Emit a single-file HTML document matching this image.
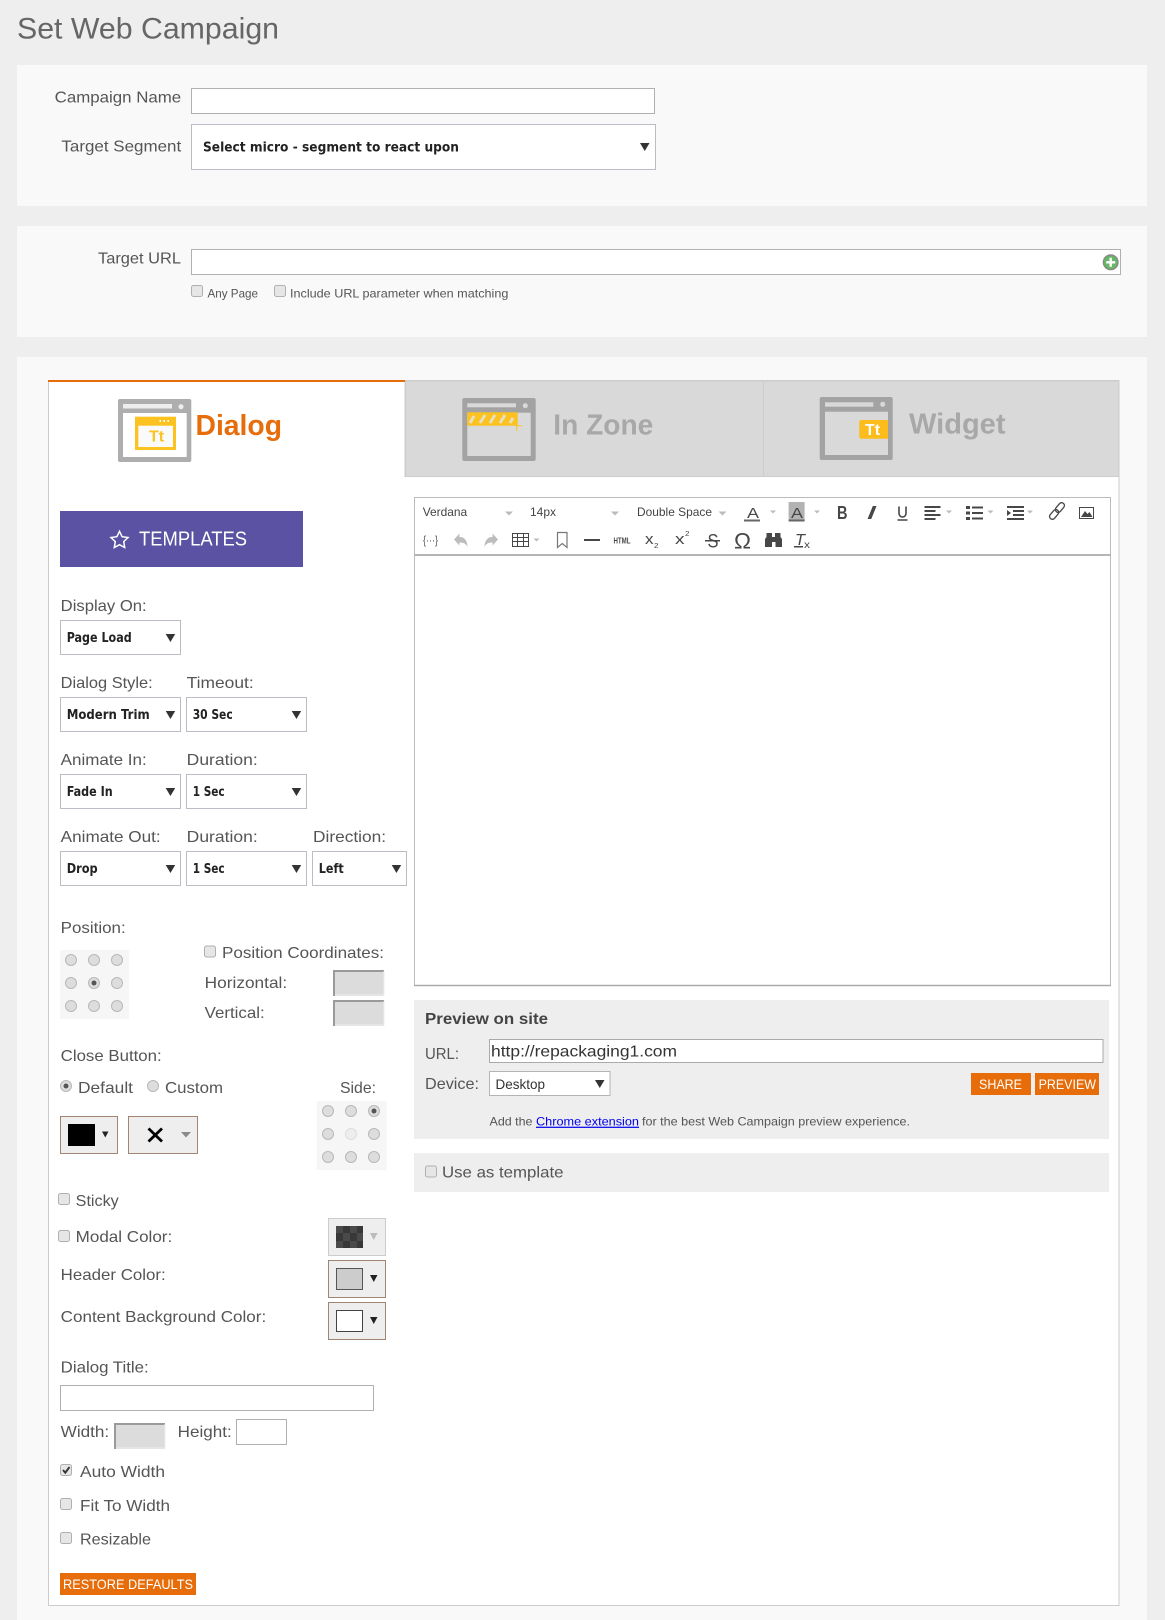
<!DOCTYPE html>
<html lang="en"><head><meta charset="utf-8"><title>Set Web Campaign</title>
<style>
html,body{margin:0;padding:0;background:#eee;width:1165px;height:1620px;overflow:hidden}
svg{display:block}
text{font-family:"Liberation Sans",Arial,sans-serif;fill:#555;font-size:16px}
.b{font-weight:700;fill:#222;font-size:13px;font-family:"DejaVu Sans","Liberation Sans",sans-serif}
.s{font-size:12px}
.w{fill:#fff;font-size:14px}
.t{font-size:12px;fill:#444}
.box{fill:#fff;stroke:#bbbcc4}
.inp{fill:#fff;stroke:#b0b0b0}
.ic{stroke:#474747;fill:none;stroke-width:1.6}
.if{fill:#474747}
.ar{fill:#bbb}
</style></head>
<body>
<svg xmlns="http://www.w3.org/2000/svg" width="1165" height="1620" viewBox="0 0 1165 1620">
<defs>
<g id="rd"><circle r="5.5" fill="#ddd" stroke="#b8b8b8"/></g>
<g id="rs"><circle r="5.5" fill="#ddd" stroke="#b8b8b8"/><circle r="2.5" fill="#555"/></g>
<g id="cb"><rect x=".5" y=".5" width="11" height="11" rx="2" fill="#e6e6e6" stroke="#b0b0b0"/></g>
<path id="tri" d="M0 0h9.5l-4.75 8z" fill="#333"/>
</defs>
<rect width="1165" height="1620" fill="#eee"/>
<text x="17" y="38.5" style="font-size:30px;fill:#666" textLength="262" lengthAdjust="spacingAndGlyphs">Set Web Campaign</text>

<!-- panel 1 -->
<rect x="17" y="65" width="1130" height="141" fill="#f9f9f9"/>
<text x="54.7" y="102.5" textLength="126.5" lengthAdjust="spacingAndGlyphs">Campaign Name</text>
<rect class="inp" x="191.5" y="88.5" width="463" height="25"/>
<text x="61.4" y="151.5" textLength="119.8" lengthAdjust="spacingAndGlyphs">Target Segment</text>
<rect class="box" x="191.5" y="124.5" width="464" height="45"/>
<text class="b" x="203" y="151.7" textLength="256" lengthAdjust="spacingAndGlyphs">Select micro - segment to react upon</text>
<use href="#tri" x="640" y="143"/>

<!-- panel 2 -->
<rect x="17" y="226" width="1130" height="111" fill="#f9f9f9"/>
<text x="98" y="263.5" textLength="83" lengthAdjust="spacingAndGlyphs">Target URL</text>
<rect class="inp" x="191.5" y="249.5" width="929" height="25"/>
<circle cx="1110.7" cy="262.3" r="8" fill="#888"/><circle cx="1110.7" cy="262.3" r="6.7" fill="#68b668"/>
<path d="M1110.7 257.8v9M1106.2 262.3h9" stroke="#fff" stroke-width="2.4"/>
<use href="#cb" x="191" y="285"/>
<text class="s" x="207.5" y="297.5" textLength="50.5" lengthAdjust="spacingAndGlyphs">Any Page</text>
<use href="#cb" x="274" y="285"/>
<text class="s" x="290" y="297.5" textLength="218.4" lengthAdjust="spacingAndGlyphs">Include URL parameter when matching</text>

<!-- panel 3 -->
<rect x="17" y="357" width="1130" height="1263" fill="#f9f9f9"/>
<rect x="48.5" y="380.5" width="1070.5" height="1225" fill="#fff" stroke="#ccc"/>
<rect x="405" y="381" width="714" height="95.500" fill="#d9d9d9" stroke="#ccc"/>
<path d="M763.500 381v95" stroke="#ccc"/>
<rect x="48" y="380" width="357" height="2" fill="#e66d0a"/>
<path d="M405.500 381v96" stroke="#ccc"/>

<!-- Dialog tab -->
<rect x="118" y="399" width="73.300" height="63" rx="2" fill="#aeaeae"/>
<rect x="123" y="413" width="63.700" height="44" fill="#fff"/>
<rect x="123" y="404" width="49" height="4.500" fill="#eee"/>
<circle cx="181" cy="406.700" r="2.500" fill="#eee"/>
<rect x="135" y="416.700" width="41" height="33.300" fill="#fcc21f"/>
<rect x="138.300" y="425.700" width="34.700" height="21.300" fill="#fafafa"/>
<path d="M159.500 421h1.500M163.500 421h1.500M167.500 421h1.500" stroke="#fff" stroke-width="2"/>
<text x="149" y="441.700" style="font-size:16px;font-weight:700;fill:#fcc21f" textLength="15" lengthAdjust="spacingAndGlyphs">Tt</text>
<text x="195.500" y="435" style="font-size:29px;font-weight:700;fill:#e66d0a" textLength="86.500" lengthAdjust="spacingAndGlyphs">Dialog</text>

<!-- In Zone tab -->
<rect x="462.300" y="398" width="73.400" height="63" rx="2" fill="#a3a3a3"/>
<rect x="467.300" y="412.700" width="63.400" height="43.300" fill="#d9d9d9"/>
<rect x="467.300" y="403.300" width="48.700" height="4" fill="#d9d9d9"/>
<circle cx="525.300" cy="405.700" r="2.500" fill="#d9d9d9"/>
<rect x="467.300" y="412.300" width="50.400" height="13.400" fill="#fcc21f"/>
<path d="M470 423l4-7M480 423l5-8M490 423l5-8M500 423l5-8M510 423l3-5" stroke="#e7dfc0" stroke-width="3"/>
<path d="M516.700 425v6M516 425.700h5.700" stroke="#fcc21f" stroke-width="1"/>
<text x="553.300" y="434.300" style="font-size:29px;font-weight:700;fill:#a8a8a8" textLength="100" lengthAdjust="spacingAndGlyphs">In Zone</text>

<!-- Widget tab -->
<rect x="819.700" y="397" width="73" height="63" rx="2" fill="#a3a3a3"/>
<rect x="825" y="411.700" width="63" height="43.300" fill="#d9d9d9"/>
<rect x="825" y="402.300" width="48.300" height="4.400" fill="#d9d9d9"/>
<circle cx="882.700" cy="404.300" r="2.500" fill="#d9d9d9"/>
<path d="M861.300 420H888v18.700h-26.700a2 2 0 0 1-2-2V422a2 2 0 0 1 2-2z" fill="#fcbc1c"/>
<text x="865" y="435" style="font-size:16px;font-weight:700;fill:#fff" textLength="15" lengthAdjust="spacingAndGlyphs">Tt</text>
<text x="909" y="433.700" style="font-size:29px;font-weight:700;fill:#a8a8a8" textLength="96.500" lengthAdjust="spacingAndGlyphs">Widget</text>

<!-- Templates -->
<rect x="60" y="511" width="243" height="56" fill="#5b52a3"/>
<path d="M119.500 531.300l2.600 5.400 5.900.8-4.300 4.100 1 5.900-5.200-2.800-5.200 2.800 1-5.900-4.300-4.100 5.900-.8z" fill="none" stroke="#fff" stroke-width="1.500"/>
<text x="139" y="545.700" style="font-size:20px;fill:#fff" textLength="108" lengthAdjust="spacingAndGlyphs">TEMPLATES</text>

<!-- left form -->
<text x="60.700" y="611" textLength="86" lengthAdjust="spacingAndGlyphs">Display On:</text>
<rect class="box" x="60.500" y="620.500" width="120" height="34"/>
<text class="b" x="66.700" y="642" textLength="65" lengthAdjust="spacingAndGlyphs">Page Load</text>
<use href="#tri" x="165.700" y="634"/>

<text x="60.700" y="688" textLength="92" lengthAdjust="spacingAndGlyphs">Dialog Style:</text>
<text x="186.700" y="688" textLength="67" lengthAdjust="spacingAndGlyphs">Timeout:</text>
<rect class="box" x="60.500" y="697.500" width="120" height="34"/>
<text class="b" x="66.700" y="719" textLength="83" lengthAdjust="spacingAndGlyphs">Modern Trim</text>
<use href="#tri" x="165.700" y="711"/>
<rect class="box" x="186.500" y="697.500" width="120" height="34"/>
<text class="b" x="192.700" y="719" textLength="40" lengthAdjust="spacingAndGlyphs">30 Sec</text>
<use href="#tri" x="291.700" y="711"/>

<text x="60.700" y="765" textLength="86" lengthAdjust="spacingAndGlyphs">Animate In:</text>
<text x="186.700" y="765" textLength="71" lengthAdjust="spacingAndGlyphs">Duration:</text>
<rect class="box" x="60.500" y="774.500" width="120" height="34"/>
<text class="b" x="66.700" y="796" textLength="46" lengthAdjust="spacingAndGlyphs">Fade In</text>
<use href="#tri" x="165.700" y="788"/>
<rect class="box" x="186.500" y="774.500" width="120" height="34"/>
<text class="b" x="192.700" y="796" textLength="32" lengthAdjust="spacingAndGlyphs">1 Sec</text>
<use href="#tri" x="291.700" y="788"/>

<text x="60.700" y="842" textLength="100" lengthAdjust="spacingAndGlyphs">Animate Out:</text>
<text x="186.700" y="842" textLength="71" lengthAdjust="spacingAndGlyphs">Duration:</text>
<text x="313" y="842" textLength="73" lengthAdjust="spacingAndGlyphs">Direction:</text>
<rect class="box" x="60.500" y="851.500" width="120" height="34"/>
<text class="b" x="66.700" y="873" textLength="31" lengthAdjust="spacingAndGlyphs">Drop</text>
<use href="#tri" x="165.700" y="865"/>
<rect class="box" x="186.500" y="851.500" width="120" height="34"/>
<text class="b" x="192.700" y="873" textLength="32" lengthAdjust="spacingAndGlyphs">1 Sec</text>
<use href="#tri" x="291.700" y="865"/>
<rect class="box" x="312.500" y="851.500" width="94" height="34"/>
<text class="b" x="318.700" y="873" textLength="25" lengthAdjust="spacingAndGlyphs">Left</text>
<use href="#tri" x="391.700" y="865"/>

<text x="60.700" y="933" textLength="65" lengthAdjust="spacingAndGlyphs">Position:</text>
<rect x="60" y="950" width="69" height="69" fill="#f6f6f6"/>
<use href="#rd" x="71" y="960"/><use href="#rd" x="94" y="960"/><use href="#rd" x="117" y="960"/>
<use href="#rd" x="71" y="983"/><use href="#rs" x="94" y="983"/><use href="#rd" x="117" y="983"/>
<use href="#rd" x="71" y="1006"/><use href="#rd" x="94" y="1006"/><use href="#rd" x="117" y="1006"/>

<use href="#cb" x="204" y="945.500"/>
<text x="222" y="958" textLength="162" lengthAdjust="spacingAndGlyphs">Position Coordinates:</text>
<text x="204.700" y="988" textLength="82.500" lengthAdjust="spacingAndGlyphs">Horizontal:</text>
<rect x="333" y="970" width="51" height="26" fill="#dcdcdc"/>
<path d="M334 996v-25h50" fill="none" stroke="#9a9a9a" stroke-width="2"/><path d="M335 995h49v-24" fill="none" stroke="#eee"/>
<text x="204.700" y="1018" textLength="60" lengthAdjust="spacingAndGlyphs">Vertical:</text>
<rect x="333" y="1000" width="51" height="26" fill="#dcdcdc"/>
<path d="M334 1026v-25h50" fill="none" stroke="#9a9a9a" stroke-width="2"/><path d="M335 1025h49v-24" fill="none" stroke="#eee"/>

<text x="60.700" y="1061" textLength="101" lengthAdjust="spacingAndGlyphs">Close Button:</text>
<use href="#rs" x="66" y="1086"/>
<text x="78" y="1093" textLength="55" lengthAdjust="spacingAndGlyphs">Default</text>
<use href="#rd" x="153" y="1086"/>
<text x="165" y="1093" textLength="58" lengthAdjust="spacingAndGlyphs">Custom</text>
<text x="340" y="1093" textLength="36" lengthAdjust="spacingAndGlyphs">Side:</text>
<rect x="316.700" y="1101" width="70" height="69" fill="#f6f6f6"/>
<use href="#rd" x="328" y="1111"/><use href="#rd" x="351" y="1111"/><use href="#rs" x="374" y="1111"/>
<use href="#rd" x="328" y="1134"/><circle cx="351" cy="1134" r="5.500" fill="#eee" stroke="#ddd"/><use href="#rd" x="374" y="1134"/>
<use href="#rd" x="328" y="1157"/><use href="#rd" x="351" y="1157"/><use href="#rd" x="374" y="1157"/>

<rect x="60.500" y="1116.500" width="57" height="37" fill="#eee" stroke="#a08672"/>
<rect x="68" y="1124" width="27" height="22" fill="#000"/>
<path d="M102 1131.500h6.500l-3.250 6z" fill="#222"/>
<rect x="128.500" y="1116.500" width="69" height="37" fill="#eee" stroke="#a08672"/>
<path d="M148.500 1128.500l13.500 13M162 1128.500l-13.500 13" stroke="#000" stroke-width="2.800"/>
<path d="M181 1132h10l-5 5.500z" fill="#8a8a8a"/>

<use href="#cb" x="58" y="1193"/>
<text x="75.700" y="1206" textLength="43" lengthAdjust="spacingAndGlyphs">Sticky</text>
<use href="#cb" x="58" y="1230"/>
<text x="75.700" y="1242" textLength="96.500" lengthAdjust="spacingAndGlyphs">Modal Color:</text>
<rect x="328.500" y="1218.500" width="57" height="37" fill="#eee" stroke="#ccc"/>
<rect x="336" y="1226" width="27" height="22" fill="#383838"/>
<path d="M336 1226h7v7h-7zM350 1226h7v7h-7zM343 1233h7v8h-7zM357 1233h6v8h-6zM336 1241h7v7h-7zM350 1241h7v7h-7z" fill="#4a4a4a"/>
<path d="M370 1233h7.500l-3.750 7z" fill="#bbb"/>

<text x="60.700" y="1280" textLength="105" lengthAdjust="spacingAndGlyphs">Header Color:</text>
<rect x="328.500" y="1260.500" width="57" height="37" fill="#eee" stroke="#a08672"/>
<rect x="336.500" y="1268.500" width="26" height="21" fill="#ccc" stroke="#555"/>
<path d="M370 1275h7.500l-3.750 7z" fill="#222"/>
<text x="60.700" y="1322" textLength="205.500" lengthAdjust="spacingAndGlyphs">Content Background Color:</text>
<rect x="328.500" y="1302.500" width="57" height="37" fill="#eee" stroke="#a08672"/>
<rect x="336.500" y="1310.500" width="26" height="21" fill="#fff" stroke="#444"/>
<path d="M370 1317h7.500l-3.750 7z" fill="#222"/>

<text x="60.700" y="1372.700" textLength="88" lengthAdjust="spacingAndGlyphs">Dialog Title:</text>
<rect class="inp" x="60.500" y="1385.500" width="313" height="25"/>
<text x="60.700" y="1437" textLength="48.500" lengthAdjust="spacingAndGlyphs">Width:</text>
<rect x="114" y="1423" width="51" height="26" fill="#dcdcdc"/>
<path d="M115 1449v-25h50" fill="none" stroke="#9a9a9a" stroke-width="2"/><path d="M116 1448h49v-24" fill="none" stroke="#eee"/>
<text x="177.700" y="1437" textLength="54" lengthAdjust="spacingAndGlyphs">Height:</text>
<rect class="inp" x="236.500" y="1419.500" width="50" height="25"/>

<rect x="60.500" y="1464.500" width="11" height="11" rx="2" fill="#e6e6e6" stroke="#b0b0b0"/>
<path d="M63 1470l2.300 2.700 4.200-5.700" fill="none" stroke="#333" stroke-width="1.900"/>
<text x="80" y="1477" textLength="85" lengthAdjust="spacingAndGlyphs">Auto Width</text>
<use href="#cb" x="60" y="1498"/>
<text x="80" y="1511" textLength="90" lengthAdjust="spacingAndGlyphs">Fit To Width</text>
<use href="#cb" x="60" y="1532"/>
<text x="80" y="1544.700" textLength="71" lengthAdjust="spacingAndGlyphs">Resizable</text>
<rect x="60" y="1573" width="136" height="22" fill="#e66d0a"/>
<text class="w" x="63" y="1589" textLength="130" lengthAdjust="spacingAndGlyphs">RESTORE DEFAULTS</text>

<!-- editor -->
<rect x="414.500" y="497.500" width="696" height="488" fill="#fff" stroke="#bbb"/>
<path d="M414 555h697" stroke="#b5b5b5" stroke-width="2"/>
<path d="M414 985.500h697" stroke="#aaa" stroke-width="1.500"/>

<text class="t" x="422.700" y="516" textLength="44.500" lengthAdjust="spacingAndGlyphs">Verdana</text>
<path class="ar" d="M505 511.500h8l-4 4z"/>
<text class="t" x="530" y="516" textLength="26" lengthAdjust="spacingAndGlyphs">14px</text>
<path class="ar" d="M611 511.500h8l-4 4z"/>
<text class="t" x="637" y="516" textLength="75" lengthAdjust="spacingAndGlyphs">Double Space</text>
<path class="ar" d="M718.500 511.500h8l-4 4z"/>

<text x="747" y="518" style="font-size:15px;fill:#474747" textLength="12" lengthAdjust="spacingAndGlyphs">A</text>
<rect x="744" y="519.500" width="16" height="2" fill="#666"/>
<path class="ar" d="M770 510.500h6l-3 3z"/>
<rect x="788.600" y="502" width="16" height="19" fill="#b3b3b3"/>
<text x="791" y="518" style="font-size:15px;fill:#474747" textLength="12" lengthAdjust="spacingAndGlyphs">A</text>
<rect x="788.600" y="519.500" width="16" height="2" fill="#666"/>
<path class="ar" d="M814 510.500h6l-3 3z"/>

<text x="837" y="519" style="font-size:18px;font-weight:700;fill:#474747" textLength="10.500" lengthAdjust="spacingAndGlyphs">B</text>
<text x="866" y="519" style="font-size:18px;font-style:italic;fill:#474747" textLength="11" lengthAdjust="spacingAndGlyphs">I</text>
<path class="ic" d="M899 506.500v7a3.500 3.500 0 0 0 7 0v-7M897.500 520h10"/>
<path class="if" d="M924.500 506h16v2h-16zM924.500 510h11v2h-11zM924.500 514h16v2h-16zM924.500 518h11v2h-11z"/>
<path class="ar" d="M946 510.500h6l-3 3z"/>
<path class="if" d="M966 506h4v3h-4zM972 506.500h11v2h-11zM966 511.500h4v3h-4zM972 512h11v2h-11zM966 517h4v3h-4zM972 517.500h11v2h-11z"/>
<path class="ar" d="M987.500 510.500h6l-3 3z"/>
<path class="if" d="M1007 506h17v2h-17zM1013 510h11v2h-11zM1013 514h11v2h-11zM1007 518h17v2h-17zM1007 510l4 3-4 3z"/>
<path class="ar" d="M1027 510.500h6l-3 3z"/>
<g transform="translate(1057 511) rotate(-50)" fill="none" stroke="#474747" stroke-width="1.300">
<rect x="-10" y="-2.800" width="11" height="5.600" rx="2.800"/>
<rect x="-1" y="-2.800" width="11" height="5.600" rx="2.800"/>
</g>
<rect x="1079.500" y="507.500" width="14" height="11" fill="#fff" stroke="#474747"/>
<path class="if" d="M1081 517l4-6 2.500 3 2-2 3 5z"/>

<text x="423" y="544" style="font-size:12px;fill:#555" textLength="15" lengthAdjust="spacingAndGlyphs">{···}</text>
<path d="M454 539.500l5.500-6v3.500c5 0 8 3.500 8 10-1.500-3.500-4-4.500-8-4.500v3z" fill="#bdbdbd"/>
<path d="M498 539.500l-5.500-6v3.500c-5 0-8 3.500-8 10 1.500-3.500 4-4.500 8-4.500v3z" fill="#bdbdbd"/>
<rect x="512.500" y="533.500" width="16" height="13" fill="#fff" stroke="#474747"/>
<path d="M512.500 537.500h16M512.500 541.500h16M517.500 533.500v13M523.500 533.500v13" stroke="#474747" fill="none"/>
<path class="ar" d="M533.500 538.500h6l-3 3z"/>
<path d="M557.500 532.500h9.500v15l-4.750-4-4.750 4z" fill="none" stroke="#777" stroke-width="1.200"/>
<rect x="584" y="539" width="16" height="2" fill="#474747"/>
<text x="613.500" y="543.500" style="font-size:8px;font-weight:700;fill:#474747" textLength="17" lengthAdjust="spacingAndGlyphs">HTML</text>
<text x="645" y="544" style="font-size:15px;fill:#474747" textLength="8.500" lengthAdjust="spacingAndGlyphs">x</text>
<text x="654" y="548" style="font-size:7px;fill:#474747" textLength="4.500" lengthAdjust="spacingAndGlyphs">2</text>
<text x="675" y="544" style="font-size:15px;fill:#474747" textLength="9.500" lengthAdjust="spacingAndGlyphs">x</text>
<text x="685" y="536" style="font-size:7px;fill:#474747" textLength="4.500" lengthAdjust="spacingAndGlyphs">2</text>
<text x="707.500" y="547.500" style="font-size:19px;fill:#474747" textLength="11" lengthAdjust="spacingAndGlyphs">S</text>
<rect x="705" y="540" width="15" height="1.500" fill="#474747"/>
<text x="734" y="548.500" style="font-size:22px;fill:#474747" textLength="17" lengthAdjust="spacingAndGlyphs">Ω</text>
<path class="if" d="M766.500 533h5.500v4h3v-4h5.500v4l1.500 2v8h-6.500v-5h-3.500v5h-7v-8l1.500-2z"/>
<text x="795" y="545" style="font-size:16px;font-style:italic;fill:#474747" textLength="10" lengthAdjust="spacingAndGlyphs">T</text>
<rect x="794" y="546" width="9" height="1.500" fill="#474747"/>
<text x="804" y="548" style="font-size:10px;fill:#474747" textLength="6" lengthAdjust="spacingAndGlyphs">x</text>

<!-- preview -->
<rect x="414" y="1000" width="695" height="139" fill="#eee"/>
<text x="425" y="1024" style="font-weight:700;fill:#444" textLength="123" lengthAdjust="spacingAndGlyphs">Preview on site</text>
<text x="425" y="1059" textLength="34" lengthAdjust="spacingAndGlyphs">URL:</text>
<rect x="489.500" y="1039.500" width="613.500" height="23" fill="#fff" stroke="#aaa"/>
<text x="491" y="1056.500" style="fill:#333" textLength="186" lengthAdjust="spacingAndGlyphs">http://repackaging1.com</text>
<text x="425" y="1089" textLength="54" lengthAdjust="spacingAndGlyphs">Device:</text>
<rect x="489.500" y="1071.500" width="120.500" height="24" fill="#fff" stroke="#b4b4b4"/>
<text x="495.500" y="1089" style="font-size:14px;fill:#333" textLength="49.500" lengthAdjust="spacingAndGlyphs">Desktop</text>
<use href="#tri" x="595" y="1080"/>
<rect x="971" y="1073" width="60" height="22" fill="#e66d0a"/>
<text class="w" x="979" y="1089" textLength="43" lengthAdjust="spacingAndGlyphs">SHARE</text>
<rect x="1035" y="1073" width="64" height="22" fill="#e66d0a"/>
<text class="w" x="1038.600" y="1089" textLength="57.400" lengthAdjust="spacingAndGlyphs">PREVIEW</text>
<text class="s" x="489.500" y="1125.700" textLength="43" lengthAdjust="spacingAndGlyphs">Add the</text>
<text class="s" x="536" y="1125.700" style="fill:#00e;text-decoration:underline" textLength="103" lengthAdjust="spacingAndGlyphs">Chrome extension</text>
<text class="s" x="642" y="1125.700" textLength="268" lengthAdjust="spacingAndGlyphs">for the best Web Campaign preview experience.</text>

<rect x="414" y="1153" width="695" height="39" fill="#eee"/>
<use href="#cb" x="425" y="1165.500"/>
<text x="442" y="1177.700" textLength="121.500" lengthAdjust="spacingAndGlyphs">Use as template</text>
</svg>
</body></html>
